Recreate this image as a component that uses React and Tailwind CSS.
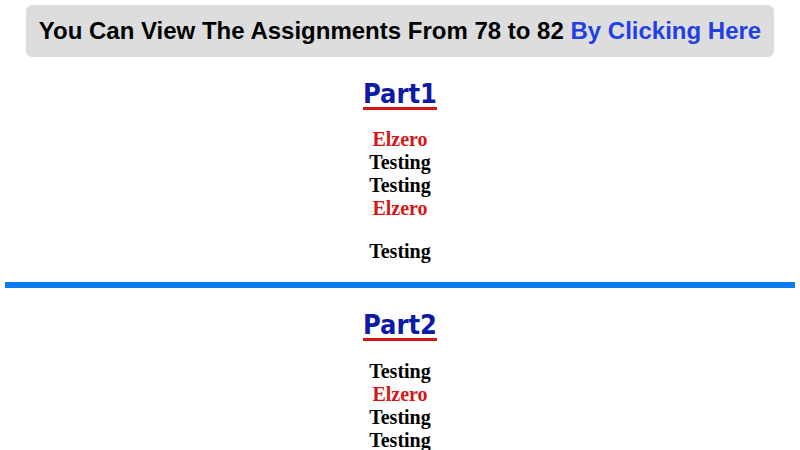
export default function App() {
  const serif = "font-['Liberation_Serif',serif] font-bold text-[20px] leading-[23px]";
  const head = "font-['DejaVu_Sans_Condensed','DejaVu_Sans',sans-serif] [font-stretch:condensed] font-bold text-[27px] leading-[34px] text-[#0c1aa6] underline decoration-[#d41818] decoration-[3px] underline-offset-[4px]";
  return (
    <div className="bg-white w-[800px] h-[450px] overflow-hidden">
      <div className="pt-[5px] px-[26px]">
        <div className="bg-[#dddddd] rounded-[6px] h-[52px] flex items-center justify-center font-['Liberation_Sans',Arial,sans-serif] font-bold text-[24px] text-black">
          <span>You Can View The Assignments From 78 to 82&nbsp;</span>
          <span className="text-[#2340e2]">By Clicking Here</span>
        </div>
      </div>
      <div className="flex flex-col items-center">
        <h2 className={`mt-[20px] ${head}`}>Part1</h2>
        <div className={`mt-[17px] text-center ${serif}`}>
          <div className="text-[#d41818]">Elzero</div>
          <div className="text-black">Testing</div>
          <div className="text-black">Testing</div>
          <div className="text-[#d41818]">Elzero</div>
          <div className="text-black mt-[20px]">Testing</div>
        </div>
      </div>
      <div className="mx-[5px] mt-[19px] h-[6px] bg-[#0b7cf0]"></div>
      <div className="flex flex-col items-center">
        <h2 className={`mt-[20px] ${head}`}>Part2</h2>
        <div className={`mt-[18px] text-center ${serif}`}>
          <div className="text-black">Testing</div>
          <div className="text-[#d41818]">Elzero</div>
          <div className="text-black">Testing</div>
          <div className="text-black">Testing</div>
        </div>
      </div>
    </div>
  );
}
